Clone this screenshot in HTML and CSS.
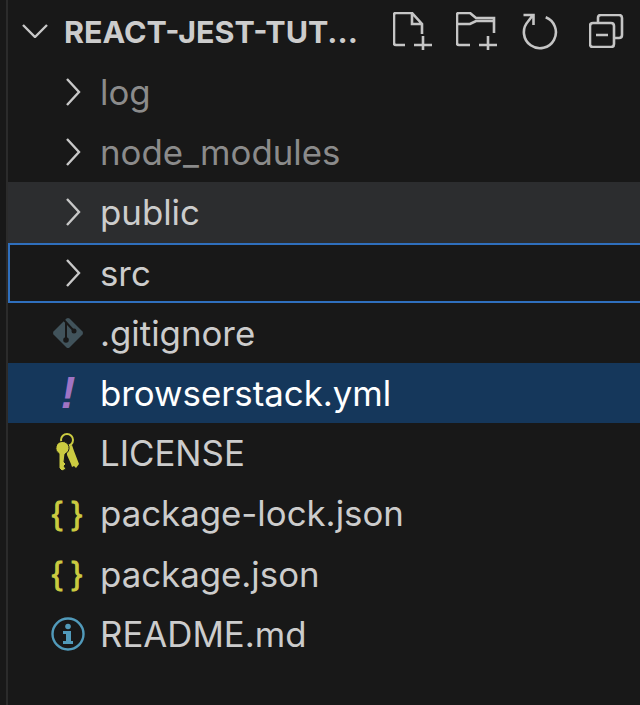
FILE: index.html
```html
<!DOCTYPE html>
<html>
	<head>
		<meta charset="utf-8" />
		<title>Explorer</title>
		<link rel="stylesheet" href="styles.css">
	</head>
	<body>
		<div class="explorer">
			<div class="header">
				<svg class="head-arrow" width="26" height="14" viewBox="0 0 26 14"><path d="M1 1 L13 13 L25 1" /></svg>
				<span class="title">REACT-JEST-TUT...</span>
				<div class="tools">
					<svg width="40" height="38" viewBox="0 0 40 38"><path d="M12 33 H3 Q1 33 1 31 V3 Q1 1 3 1 H19 L29 12 V22 M19 1 V12 H29 M21 33 H39 M30 24 V38" /></svg>
					<svg width="43" height="38" viewBox="0 0 43 38"><path d="M14 33 H3 Q1 33 1 31 V3 Q1 1 3 1 H14 L20 6 H38 V21 M1 12 H14 L20 9 H38 M23 33 H41 M32 24 V38" /></svg>
					<svg width="36" height="38" viewBox="0 0 36 38"><path d="M23.7 5.3 A16 16 0 1 1 6 9.5 L11 3 M1.5 3 H11.5 V13" /></svg>
					<svg class="collapse" width="35" height="34" viewBox="0 0 35 34"><path d="M9 8 V4 Q9 1 12 1 H30 Q33 1 33 4 V21 Q33 24 30 24 H25 M4 9 H22 Q25 9 25 12 V30 Q25 33 22 33 H4 Q1 33 1 30 V12 Q1 9 4 9 Z M7 21 H19" /></svg>
				</div>
			</div>
			<div class="row dim">
				<svg class="arrow" width="16" height="28" viewBox="0 0 16 28"><path d="M2 1 L14 14 L2 27" /></svg>
				<span>log</span>
			</div>
			<div class="row dim">
				<svg class="arrow" width="16" height="28" viewBox="0 0 16 28"><path d="M2 1 L14 14 L2 27" /></svg>
				<span>node_modules</span>
			</div>
			<div class="row hover">
				<svg class="arrow" width="16" height="28" viewBox="0 0 16 28"><path d="M2 1 L14 14 L2 27" /></svg>
				<span>public</span>
			</div>
			<div class="row focus">
				<svg class="arrow" width="16" height="28" viewBox="0 0 16 28"><path d="M2 1 L14 14 L2 27" /></svg>
				<span>src</span>
			</div>
			<div class="row file">
				<svg class="icon" width="32" height="32" viewBox="0 0 32 32">
					<path class="git" d="M14.5 1.5 Q16 0.5 17.5 1.5 L30.5 14.5 Q31.5 16 30.5 17.5 L17.5 30.5 Q16 31.5 14.5 30.5 L1.5 17.5 Q0.5 16 1.5 14.5 Z" />
					<path class="git-line" d="M11 2 L22 14 M14 6 V23" />
					<circle class="git-dot" cx="14" cy="23" r="2.8" />
					<circle class="git-dot" cx="22" cy="14" r="2.5" />
				</svg>
				<span>.gitignore</span>
			</div>
			<div class="row file selected">
				<span class="icon bang">!</span>
				<span>browserstack.yml</span>
			</div>
			<div class="row file">
				<svg class="icon" width="32" height="40" viewBox="0 0 32 40">
					<circle class="key-ring" cx="15" cy="7" r="6" />
					<path class="key" d="M15 14 L20 12 L22 18 L27 31 L24 35 L22 33 L20 34 L19 31 L15 22 Z" />
					<path class="key key-front" d="M10 8.5 A6.5 6.5 0 0 1 13 21 L12 29 L14 31 L12 33 L14 36 L10 38 L7 35 L7 20.5 A6.5 6.5 0 0 1 10 8.5 Z" />
				</svg>
				<span>LICENSE</span>
			</div>
			<div class="row file">
				<span class="icon braces">{ }</span>
				<span>package-lock.json</span>
			</div>
			<div class="row file">
				<span class="icon braces">{ }</span>
				<span>package.json</span>
			</div>
			<div class="row file">
				<svg class="icon" width="34" height="34" viewBox="0 0 34 34">
					<circle class="info-ring" cx="17" cy="17" r="15.5" />
					<circle class="info-dot" cx="17" cy="9.5" r="2.8" />
					<path class="info-dot" d="M12 14 H20 V24 H22 V27 H12 V24 H15 V17 H12 Z" />
				</svg>
				<span>README.md</span>
			</div>
		</div>
	</body>
</html>
```

FILE: styles.css
```css
* {
	padding: 0;
	margin: 0;
	box-sizing: border-box;
}
body {
	width: 640px;
	height: 705px;
	overflow: hidden;
	background-color: #181818;
	padding-left: 6px;
	font-family: Inter, "Liberation Sans", sans-serif;
}
svg path {
	fill: none;
}
.explorer {
	height: 705px;
	border-left: 2px solid #2b2b2b;
}
.header {
	display: flex;
	align-items: center;
	height: 62px;
	padding-left: 14px;
}
.head-arrow path,
.arrow path {
	stroke: #c8c8c8;
	stroke-width: 2.4;
}
.title {
	margin-left: 16px;
	width: 329px;
	font-size: 30.5px;
	font-weight: 700;
	color: #cccccc;
	white-space: nowrap;
}
.tools {
	display: flex;
	align-items: center;
	gap: 23px;
}
.tools svg path {
	stroke: #c5c5c5;
	stroke-width: 2.6;
}
.tools .collapse {
	margin-left: 8px;
}
.row {
	display: flex;
	align-items: center;
	height: 60.2px;
	padding-left: 57px;
	font-size: 34.8px;
	color: #cccccc;
	white-space: nowrap;
}
.row .arrow {
	margin-right: 19px;
}
.dim {
	color: #8b8b8b;
}
.hover {
	background-color: #2c2d2f;
}
.focus {
	border: 2px solid #2f6fbd;
	border-right: none;
	padding-left: 55px;
}
.file {
	padding-left: 43px;
}
.selected {
	background-color: #15375b;
	color: #ffffff;
}
.icon {
	flex: none;
	width: 34px;
	margin-right: 15px;
	text-align: center;
}
.git {
	fill: #41535b !important;
}
.git-line {
	stroke: #181818;
	stroke-width: 2;
}
.git-dot {
	fill: #181818 !important;
}
.bang {
	font-family: "Liberation Sans", sans-serif;
	font-size: 44px;
	font-style: italic;
	font-weight: 700;
	color: #a074c4;
}
.key-ring {
	fill: none;
	stroke: #cbcb41;
	stroke-width: 2;
}
.key {
	fill: #cbcb41 !important;
}
.key-front {
	stroke: #181818;
	stroke-width: 1;
}
.braces {
	padding-right: 2px;
	font-family: "Liberation Sans", sans-serif;
	font-size: 32px;
	-webkit-text-stroke: 0.9px #cbcb41;
	color: #cbcb41;
}
.info-ring {
	fill: none;
	stroke: #519aba;
	stroke-width: 2.4;
}
.info-dot {
	fill: #519aba !important;
}
```
